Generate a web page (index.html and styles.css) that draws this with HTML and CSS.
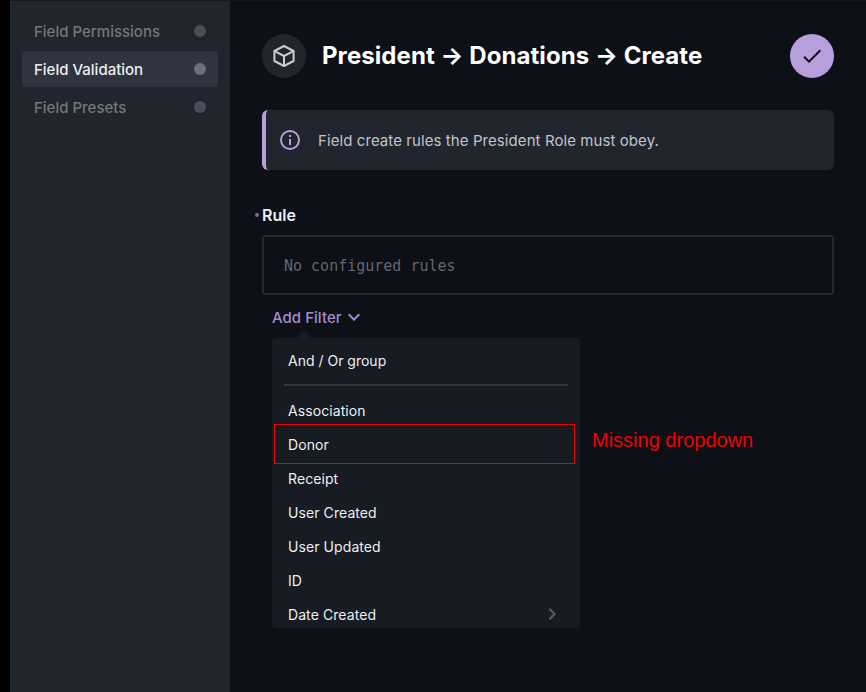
FILE: index.html
```html
<!DOCTYPE html>
<html lang="en">
<head>
<meta charset="utf-8">
<title>President → Donations → Create</title>
<link rel="stylesheet" href="styles.css">
</head>
<body>
<div class="app">
  <aside class="sidebar">
    <nav class="tabs">
      <a class="tab"><span>Field Permissions</span><i class="dot"></i></a>
      <a class="tab active"><span>Field Validation</span><i class="dot"></i></a>
      <a class="tab"><span>Field Presets</span><i class="dot"></i></a>
    </nav>
  </aside>
  <main class="main">
    <header class="header">
      <div class="header-icon">
        <svg width="24" height="24" viewBox="0 0 24 24" fill="none" stroke="currentColor" stroke-width="2" stroke-linejoin="round"><path d="M12 2 21.6 7v10L12 22 2.4 17V7z"/><path d="M2.6 7.2 12 12l9.4-4.8M12 12v10"/></svg>
      </div>
      <h1 class="title">President → Donations → Create</h1>
      <button class="save">
        <svg width="24" height="24" viewBox="0 0 24 24" fill="currentColor"><path d="M9 16.17 4.83 12l-1.42 1.41L9 19 21 7l-1.41-1.41z"/></svg>
      </button>
    </header>
    <div class="notice">
      <svg class="notice-icon" width="24" height="24" viewBox="0 0 24 24" fill="none" stroke="currentColor" stroke-width="2"><circle cx="12" cy="12" r="9"/><path d="M12 11v6M12 7v2"/></svg>
      <span>Field create rules the President Role must obey.</span>
    </div>
    <section class="field">
      <label class="label"><i class="bullet"></i>Rule</label>
      <div class="rules">No configured rules</div>
      <div class="add">
        <a class="add-link">Add Filter
          <svg width="24" height="24" viewBox="0 0 24 24" fill="currentColor"><path d="M16.59 8.59 12 13.17 7.41 8.59 6 10l6 6 6-6z"/></svg>
        </a>
        <div class="menu">
          <i class="arrow"></i>
          <div class="item item-first">And / Or group</div>
          <hr class="sep">
          <div class="item">Association</div>
          <div class="item">Donor</div>
          <div class="item">Receipt</div>
          <div class="item">User Created</div>
          <div class="item">User Updated</div>
          <div class="item">ID</div>
          <div class="item">Date Created
            <svg class="chev" width="24" height="24" viewBox="0 0 24 24" fill="currentColor"><path d="M8.59 16.59 13.17 12 8.59 7.41 10 6l6 6-6 6z"/></svg>
          </div>
          <div class="mark"></div>
          <div class="note">Missing dropdown</div>
        </div>
      </div>
    </section>
  </main>
</div>
</body>
</html>
```
FILE: styles.css
```css
* { box-sizing: border-box; }
html, body { margin: 0; height: 100%; }
body {
  background: #000;
  font-family: Inter, "Noto Sans", sans-serif;
  color: #e5e7ea;
  overflow: hidden;
}
.app {
  display: flex;
  height: 692px;
  margin-left: 10px;
}
.sidebar {
  width: 220px;
  flex: none;
  background: #21252d;
  box-shadow: inset 0 1px 0 #16181d;
  padding: 13px 12px;
}
.tabs { display: flex; flex-direction: column; gap: 2px; }
.tab {
  display: flex;
  align-items: center;
  justify-content: space-between;
  height: 36px;
  padding: 0 12px;
  border-radius: 4px;
  font-size: 15px;
  font-weight: 500;
  color: #72767f;
}
.dot {
  width: 12px;
  height: 12px;
  border-radius: 50%;
  background: #4a4e58;
}
.tab.active { background: #2f343e; color: #eceef0; }
.tab.active .dot { background: #6e6f7c; }
.main {
  flex: 1;
  background: #0d1017;
  box-shadow: inset 0 1px 0 #16181d;
  padding: 34px 32px 0;
}
.header {
  display: flex;
  align-items: center;
  height: 44px;
}
.header-icon {
  width: 44px;
  height: 44px;
  flex: none;
  border-radius: 50%;
  background: #21252d;
  color: #c8ccd2;
  display: flex;
  align-items: center;
  justify-content: center;
}
.title {
  flex: 1;
  margin: -2px 0 0 16px;
  font-size: 24px;
  font-weight: 700;
  letter-spacing: 0.07px;
  color: #fff;
  white-space: nowrap;
}
.save {
  width: 44px;
  height: 44px;
  flex: none;
  border: 0;
  padding: 0;
  border-radius: 50%;
  background: #b79fdc;
  color: #0d1017;
  display: flex;
  align-items: center;
  justify-content: center;
}
.notice {
  display: flex;
  align-items: center;
  height: 60px;
  margin-top: 32px;
  padding-left: 12px;
  background: #21252d;
  border-left: 4px solid #b79fdc;
  border-radius: 6px;
  font-size: 15px;
  letter-spacing: 0.08px;
  color: #c0c4ca;
}
.notice-icon { color: #b79fdc; margin-right: 16px; }
.field { margin-top: 34px; }
.label {
  position: relative;
  display: block;
  height: 22px;
  line-height: 22px;
  font-size: 16px;
  font-weight: 600;
  color: #eceef0;
}
.bullet {
  position: absolute;
  left: -7px;
  top: 9px;
  width: 4px;
  height: 4px;
  border-radius: 50%;
  background: #6e737c;
}
.rules {
  margin-top: 9px;
  height: 60px;
  line-height: 58px;
  padding-left: 20px;
  border: 2px solid #262a33;
  border-radius: 4px;
  font-family: "DejaVu Sans Mono", "Liberation Mono", monospace;
  font-size: 15px;
  color: #62666f;
}
.add { position: relative; margin: 12px 0 0 10px; }
.add-link {
  display: flex;
  align-items: center;
  height: 20px;
  font-size: 15px;
  font-weight: 500;
  letter-spacing: 0.03px;
  color: #a28dd1;
}
.menu {
  position: absolute;
  left: 0;
  top: 31px;
  width: 308px;
  height: 290px;
  padding: 4px 0 0;
  background: #171b22;
  border-radius: 4px;
}
.arrow {
  position: absolute;
  left: 26px;
  top: -5px;
  width: 12px;
  height: 12px;
  background: #171b22;
  transform: rotate(45deg);
  border-radius: 2px;
}
.item {
  position: relative;
  display: flex;
  align-items: center;
  justify-content: space-between;
  height: 34px;
  padding: 0 16px;
  font-size: 14px;
  letter-spacing: 0.08px;
  color: #eceef0;
  white-space: nowrap;
}
.item-first { padding-top: 2px; letter-spacing: 0; }
.chev { color: #5a5e68; }
.sep {
  margin: 8px 12px 7px 12px;
  border: 0;
  border-top: 2px solid #2f343e;
}
.mark {
  position: absolute;
  left: 2px;
  top: 86px;
  width: 301px;
  height: 40px;
  border: 1px solid #f00000;
}
.note {
  position: absolute;
  left: 320px;
  top: 90px;
  font-family: "Liberation Sans", Arial, sans-serif;
  font-size: 20px;
  line-height: 24px;
  color: #f00000;
  white-space: nowrap;
}
```
